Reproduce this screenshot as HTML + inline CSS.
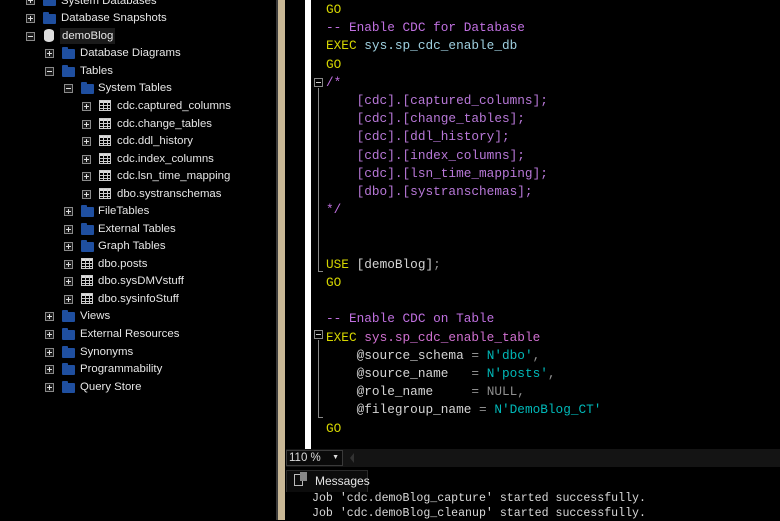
<!DOCTYPE html>
<html><head><meta charset="utf-8"><style>
*{margin:0;padding:0;box-sizing:border-box}
body{width:780px;height:520px;background:#000;overflow:hidden;position:relative;font-family:"Liberation Sans",sans-serif}
.t{position:absolute;color:#e6e6e6;font-size:11.4px;white-space:nowrap;height:16px;line-height:16px}
.pl{position:absolute;width:9px;height:9px;border:1px solid #8a8a8a;background:#1a1a1a}
.pl:before{content:"";position:absolute;left:1px;top:3px;width:5px;height:1px;background:#ddd}
.pl.p:after{content:"";position:absolute;left:3px;top:1px;width:1px;height:5px;background:#ddd}
.f{position:absolute;width:13px;height:10px;background:#1f4fa0;border-radius:1px}
.f:before{content:"";position:absolute;left:0;top:-2px;width:6px;height:3px;background:#1f4fa0;border-radius:1px 1px 0 0}
.g{position:absolute;width:12px;height:11px;border:1px solid #ccc;background:
linear-gradient(90deg,transparent 3px,#ccc 3px,#ccc 4px,transparent 4px,transparent 7px,#ccc 7px,#ccc 8px,transparent 8px),
linear-gradient(#ddd 2px,transparent 2px,transparent 4px,#ccc 4px,#ccc 5px,transparent 5px,transparent 7px,#ccc 7px,#ccc 8px,transparent 8px);}
.code{position:absolute;left:326px;font-family:"Liberation Mono",monospace;font-size:12.75px;white-space:pre;color:#d4d4d4;line-height:18.2px}
.k{color:#d6d600}.c{color:#c070e0}.c2{color:#b878d8}.s{color:#00b8b8}.gr{color:#909090}.b{color:#9fd0e0}.m{color:#d070d0}
.bx{position:absolute;width:9px;height:9px;border:1px solid #888;left:314px}
.bx:before{content:"";position:absolute;left:1px;top:3px;width:5px;height:1px;background:#ccc}
</style></head><body>
<div class="pl p" style="left:26px;top:-4px"></div><div class="f" style="left:43px;top:-4px"></div><div class="t" style="left:61px;top:-7px">System Databases</div>
<div class="pl p" style="left:26px;top:14px"></div><div class="f" style="left:43px;top:14px"></div><div class="t" style="left:61px;top:10px">Database Snapshots</div>
<div class="pl" style="left:26px;top:32px"></div>
<div style="position:absolute;left:44px;top:29px;width:10px;height:13px;background:#ddd;border-radius:5px/3px"></div>
<div class="t" style="left:60px;top:28px;background:#1a1a1a;padding:0 2px">demoBlog</div>
<div class="pl p" style="left:45px;top:49px"></div><div class="f" style="left:62px;top:49px"></div><div class="t" style="left:80px;top:45px">Database Diagrams</div>
<div class="pl" style="left:45px;top:67px"></div><div class="f" style="left:62px;top:67px"></div><div class="t" style="left:80px;top:63px">Tables</div>
<div class="pl" style="left:64px;top:84px"></div><div class="f" style="left:81px;top:84px"></div><div class="t" style="left:98px;top:80px">System Tables</div>
<div class="pl p" style="left:82px;top:102px"></div><div class="g" style="left:99px;top:100px"></div><div class="t" style="left:117px;top:98px">cdc.captured_columns</div>
<div class="pl p" style="left:82px;top:120px"></div><div class="g" style="left:99px;top:118px"></div><div class="t" style="left:117px;top:116px">cdc.change_tables</div>
<div class="pl p" style="left:82px;top:137px"></div><div class="g" style="left:99px;top:135px"></div><div class="t" style="left:117px;top:133px">cdc.ddl_history</div>
<div class="pl p" style="left:82px;top:155px"></div><div class="g" style="left:99px;top:153px"></div><div class="t" style="left:117px;top:151px">cdc.index_columns</div>
<div class="pl p" style="left:82px;top:172px"></div><div class="g" style="left:99px;top:170px"></div><div class="t" style="left:117px;top:168px">cdc.lsn_time_mapping</div>
<div class="pl p" style="left:82px;top:190px"></div><div class="g" style="left:99px;top:188px"></div><div class="t" style="left:117px;top:186px">dbo.systranschemas</div>
<div class="pl p" style="left:64px;top:207px"></div><div class="f" style="left:81px;top:207px"></div><div class="t" style="left:98px;top:203px">FileTables</div>
<div class="pl p" style="left:64px;top:225px"></div><div class="f" style="left:81px;top:225px"></div><div class="t" style="left:98px;top:221px">External Tables</div>
<div class="pl p" style="left:64px;top:242px"></div><div class="f" style="left:81px;top:242px"></div><div class="t" style="left:98px;top:238px">Graph Tables</div>
<div class="pl p" style="left:64px;top:260px"></div><div class="g" style="left:81px;top:258px"></div><div class="t" style="left:98px;top:256px">dbo.posts</div>
<div class="pl p" style="left:64px;top:277px"></div><div class="g" style="left:81px;top:275px"></div><div class="t" style="left:98px;top:273px">dbo.sysDMVstuff</div>
<div class="pl p" style="left:64px;top:295px"></div><div class="g" style="left:81px;top:293px"></div><div class="t" style="left:98px;top:291px">dbo.sysinfoStuff</div>
<div class="pl p" style="left:45px;top:312px"></div><div class="f" style="left:62px;top:312px"></div><div class="t" style="left:80px;top:308px">Views</div>
<div class="pl p" style="left:45px;top:330px"></div><div class="f" style="left:62px;top:330px"></div><div class="t" style="left:80px;top:326px">External Resources</div>
<div class="pl p" style="left:45px;top:348px"></div><div class="f" style="left:62px;top:348px"></div><div class="t" style="left:80px;top:344px">Synonyms</div>
<div class="pl p" style="left:45px;top:365px"></div><div class="f" style="left:62px;top:365px"></div><div class="t" style="left:80px;top:361px">Programmability</div>
<div class="pl p" style="left:45px;top:383px"></div><div class="f" style="left:62px;top:383px"></div><div class="t" style="left:80px;top:379px">Query Store</div>
<div style="position:absolute;left:276px;top:0;width:2px;height:520px;background:#3a3a3a"></div>
<div style="position:absolute;left:278px;top:0;width:7px;height:520px;background:#c9b896"></div>
<div style="position:absolute;left:305px;top:0;width:6px;height:449px;background:#fff"></div>
<div class="code" style="top:1px"><span class="k">GO</span>
<span class="c">-- Enable CDC for Database</span>
<span class="k">EXEC</span> <span class="b">sys.sp_cdc_enable_db</span>
<span class="k">GO</span>
<span class="c">/*</span>
<span class="c2">    [cdc].[captured_columns];</span>
<span class="c2">    [cdc].[change_tables];</span>
<span class="c2">    [cdc].[ddl_history];</span>
<span class="c2">    [cdc].[index_columns];</span>
<span class="c2">    [cdc].[lsn_time_mapping];</span>
<span class="c2">    [dbo].[systranschemas];</span>
<span class="c">*/</span>


<span class="k">USE</span> [demoBlog]<span class="gr">;</span>
<span class="k">GO</span>

<span class="c">-- Enable CDC on Table</span>
<span class="k">EXEC</span> <span class="m">sys.sp_cdc_enable_table</span>
    @source_schema <span class="gr">=</span> <span class="s">N'dbo'</span><span class="gr">,</span>
    @source_name   <span class="gr">=</span> <span class="s">N'posts'</span><span class="gr">,</span>
    @role_name     <span class="gr">=</span> <span class="gr">NULL,</span>
    @filegroup_name <span class="gr">=</span> <span class="s">N'DemoBlog_CT'</span>
<span class="k">GO</span></div>
<div class="bx" style="top:78px"></div>
<div style="position:absolute;left:318px;top:88px;width:1px;height:124px;background:#888"></div>
<div style="position:absolute;left:318px;top:212px;width:1px;height:60px;background:#888"></div>
<div style="position:absolute;left:318px;top:271px;width:5px;height:1px;background:#888"></div>
<div class="bx" style="top:330px"></div>
<div style="position:absolute;left:318px;top:340px;width:1px;height:78px;background:#888"></div>
<div style="position:absolute;left:318px;top:417px;width:5px;height:1px;background:#888"></div>
<div style="position:absolute;left:286px;top:449px;width:494px;height:18px;background:#141414"></div>
<div style="position:absolute;left:286px;top:450px;width:57px;height:16px;border:1px solid #3a3a3a;background:#0a0a0a;color:#ddd;font-size:11.5px;line-height:14px;padding-left:2px">110 %<span style="position:absolute;right:3px;top:0;font-size:7px">▼</span></div>
<div style="position:absolute;left:350px;top:453px;width:0;height:0;border-right:4px solid #333;border-top:5px solid transparent;border-bottom:5px solid transparent"></div>
<div style="position:absolute;left:286px;top:470px;width:82px;height:22px;background:#0c0c0c;border:1px solid #2a2a2a;border-bottom:none"></div>
<div style="position:absolute;left:294px;top:474px;width:9px;height:12px;border:1px solid #bbb"></div>
<div style="position:absolute;left:300px;top:472px;width:7px;height:9px;background:#888"></div>
<div class="t" style="left:315px;top:473px;font-size:12px">Messages</div>
<div style="position:absolute;left:312px;top:491px;font-family:'Liberation Mono',monospace;font-size:11.6px;line-height:15px;color:#d8d8d8;white-space:pre">Job 'cdc.demoBlog_capture' started successfully.
Job 'cdc.demoBlog_cleanup' started successfully.</div>
</body></html>
